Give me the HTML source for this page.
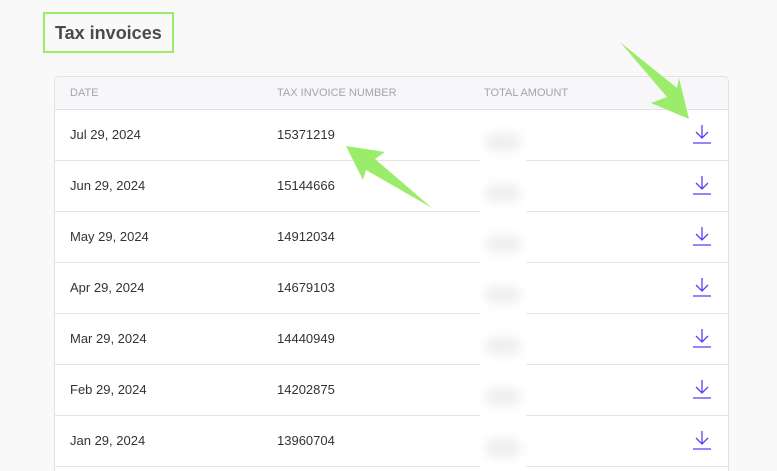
<!DOCTYPE html>
<html style="height:471px;overflow:hidden"><head><style>
body{margin:0;width:777px;height:471px;background:#f9f9fa;font-family:"Liberation Sans",sans-serif;position:relative;overflow:hidden}
.title{position:absolute;left:43px;top:12px;width:131px;height:41px;border:2px solid #9bec6a;box-sizing:border-box;font-weight:bold;font-size:18px;color:#4a4a4a;line-height:38px;padding-left:10px}
.card{position:absolute;left:54px;top:76px;width:675px;height:395px;background:#fff;border:1px solid #e2e2e4;border-bottom:none;border-radius:5px 5px 0 0;box-sizing:border-box;overflow:hidden}
.hd{height:32px;background:#f7f7f9;border-bottom:1px solid #e2e2e4;font-size:11px;color:#a5a5aa;position:relative}
.hd span,.row span{position:absolute;top:0}
.hd span{line-height:32px}
.row{height:50px;border-bottom:1px solid #e4e4e6;position:relative;font-size:13px;color:#333}
.row span{line-height:50px}
.c1{left:15px}.c2{left:222px}.c3{left:429px}
.blur{position:absolute;left:480px;top:126px;width:46px;height:345px;background:#fff}
.blur i{display:block;position:absolute;left:5px;width:36px;height:18px;border-radius:9px;background:#efefef;filter:blur(5px)}
svg.dl{position:absolute;left:636px;top:14px}
</style></head><body>
<div class="title">Tax invoices</div>
<div class="card">
<div class="hd"><span class="c1">DATE</span><span class="c2">TAX INVOICE NUMBER</span><span class="c3">TOTAL AMOUNT</span></div>
<div class="row"><span class="c1">Jul 29, 2024</span><span class="c2">15371219</span><svg class="dl" width="22" height="20"><path d="M11 1V14M5 8L11 14L17 8M2 19H20" stroke="#5a3ff0" stroke-width="1.3" fill="none"/></svg></div>
<div class="row"><span class="c1">Jun 29, 2024</span><span class="c2">15144666</span><svg class="dl" width="22" height="20"><path d="M11 1V14M5 8L11 14L17 8M2 19H20" stroke="#5a3ff0" stroke-width="1.3" fill="none"/></svg></div>
<div class="row"><span class="c1">May 29, 2024</span><span class="c2">14912034</span><svg class="dl" width="22" height="20"><path d="M11 1V14M5 8L11 14L17 8M2 19H20" stroke="#5a3ff0" stroke-width="1.3" fill="none"/></svg></div>
<div class="row"><span class="c1">Apr 29, 2024</span><span class="c2">14679103</span><svg class="dl" width="22" height="20"><path d="M11 1V14M5 8L11 14L17 8M2 19H20" stroke="#5a3ff0" stroke-width="1.3" fill="none"/></svg></div>
<div class="row"><span class="c1">Mar 29, 2024</span><span class="c2">14440949</span><svg class="dl" width="22" height="20"><path d="M11 1V14M5 8L11 14L17 8M2 19H20" stroke="#5a3ff0" stroke-width="1.3" fill="none"/></svg></div>
<div class="row"><span class="c1">Feb 29, 2024</span><span class="c2">14202875</span><svg class="dl" width="22" height="20"><path d="M11 1V14M5 8L11 14L17 8M2 19H20" stroke="#5a3ff0" stroke-width="1.3" fill="none"/></svg></div>
<div class="row"><span class="c1">Jan 29, 2024</span><span class="c2">13960704</span><svg class="dl" width="22" height="20"><path d="M11 1V14M5 8L11 14L17 8M2 19H20" stroke="#5a3ff0" stroke-width="1.3" fill="none"/></svg></div>
</div>
<div class="blur"><i style="top:7px"></i><i style="top:58px"></i><i style="top:109px"></i><i style="top:160px"></i><i style="top:211px"></i><i style="top:262px"></i><i style="top:313px"></i></div>
<svg style="position:absolute;left:0;top:0" width="777" height="471">
<polygon points="689,119 651,103 667,97 620,42 677,88 679,78" fill="#9bec6a"/>
<polygon points="346,146 385,152 375,159 432,208 366,170 363,180" fill="#9bec6a"/>
</svg>
</body></html>
